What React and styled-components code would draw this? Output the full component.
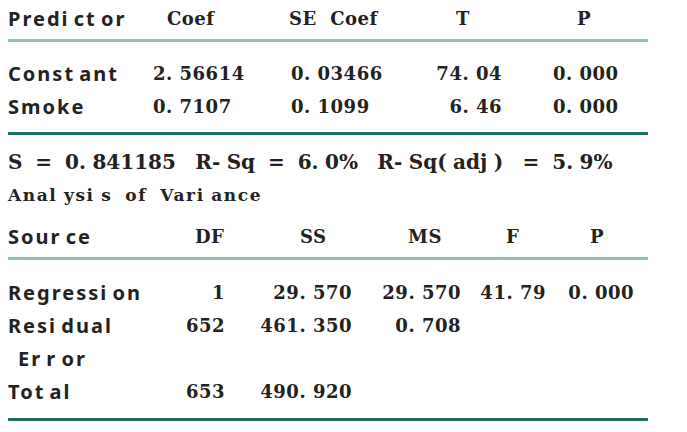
import React from "react";
import styled, { createGlobalStyle } from "styled-components";

const Global = createGlobalStyle`
  html, body { margin: 0; padding: 0; background: #fff; }
  body { color: #222; }
`;

const Page = styled.div`
  width: 640px;
  padding: 0 8px;
`;

const Grid = styled.div`
  display: grid;
  grid-template-columns: ${(p) => p.$cols};
  grid-auto-rows: ${(p) => p.$rowH || 33}px;
  align-items: center;
  padding-top: ${(p) => p.$pt || 0}px;
`;

const Cell = styled.div`
  font-family: ${(p) => (p.$serif ? '"DejaVu Serif", serif' : '"Noto Sans", sans-serif')};
  font-weight: 700;
  font-size: ${(p) => (p.$serif ? 18 : 20)}px;
  white-space: pre;
  text-align: ${(p) => p.$align || "left"};
  padding-left: ${(p) => p.$pl || 0}px;
  padding-right: ${(p) => p.$pr || 0}px;
  letter-spacing: ${(p) => (p.$serif ? "0.5px" : "2px")};
  word-spacing: ${(p) => (p.$serif ? "0" : "-3px")};
`;

const Rule = styled.div`
  height: 3px;
  margin-top: ${(p) => p.$mt}px;
  background: ${(p) => (p.$dark ? "#1a6f67" : "#8ec0b7")};
`;

const Stat = styled.div`
  height: 33px;
  line-height: 33px;
  margin-top: ${(p) => p.$mt || 0}px;
  font-family: "DejaVu Serif", serif;
  font-weight: 700;
  font-size: ${(p) => p.$size || 18}px;
  letter-spacing: ${(p) => p.$ls || 0}px;
  word-spacing: ${(p) => p.$ws || 0}px;
  white-space: pre;
`;

const COLS1 = "132px 130px 130px 130px 118px";
const COLS2 = "152px 80px 130px 100px 90px 88px";

export default function App() {
  return (
    <Page>
      <Global />
      <Grid $cols={COLS1} $rowH={36}>
        <Cell>Predi ct or</Cell>
        <Cell $serif $pl={27}>Coef</Cell>
        <Cell $serif $pl={19}>SE  Coef</Cell>
        <Cell $serif $pl={56}>T</Cell>
        <Cell $serif $pl={47}>P</Cell>
      </Grid>
      <Rule $mt={3} />
      <Grid $cols={COLS1} $pt={15}>
        <Cell>Const ant</Cell>
        <Cell $serif $pl={13}>2. 56614</Cell>
        <Cell $serif $pl={21}>0. 03466</Cell>
        <Cell $serif $align="right" $pr={28}>74. 04</Cell>
        <Cell $serif $pl={23}>0. 000</Cell>
        <Cell>Smoke</Cell>
        <Cell $serif $pl={13}>0. 7107</Cell>
        <Cell $serif $pl={21}>0. 1099</Cell>
        <Cell $serif $align="right" $pr={28}>6. 46</Cell>
        <Cell $serif $pl={23}>0. 000</Cell>
      </Grid>
      <Rule $dark $mt={9} />
      <Stat $mt={11} $size={20} $ws={-0.5}>S  =  0. 841185   R- Sq  =  6. 0%   R- Sq( adj )   =  5. 9%</Stat>
      <Stat $size={17} $ls={1.6} $ws={-1}>Anal ysi s  of  Vari ance</Stat>
      <Grid $cols={COLS2} $pt={8}>
        <Cell>Sour ce</Cell>
        <Cell $serif $pl={35}>DF</Cell>
        <Cell $serif $pl={60}>SS</Cell>
        <Cell $serif $pl={38}>MS</Cell>
        <Cell $serif $pl={36}>F</Cell>
        <Cell $serif $pl={30}>P</Cell>
      </Grid>
      <Rule $mt={4} />
      <Grid $cols={COLS2} $pt={16}>
        <Cell>Regressi on</Cell>
        <Cell $serif $align="right" $pr={15}>1</Cell>
        <Cell $serif $align="right" $pr={18}>29. 570</Cell>
        <Cell $serif $align="right" $pr={9}>29. 570</Cell>
        <Cell $serif $align="right" $pr={14}>41. 79</Cell>
        <Cell $serif $align="right" $pr={14}>0. 000</Cell>

        <Cell>Resi dual</Cell>
        <Cell $serif $align="right" $pr={15}>652</Cell>
        <Cell $serif $align="right" $pr={18}>461. 350</Cell>
        <Cell $serif $align="right" $pr={9}>0. 708</Cell>
        <Cell />
        <Cell />

        <Cell $pl={10}>Er r or</Cell>
        <Cell />
        <Cell />
        <Cell />
        <Cell />
        <Cell />

        <Cell>Tot al</Cell>
        <Cell $serif $align="right" $pr={15}>653</Cell>
        <Cell $serif $align="right" $pr={18}>490. 920</Cell>
        <Cell />
        <Cell />
        <Cell />
      </Grid>
      <Rule $dark $mt={10} />
    </Page>
  );
}
